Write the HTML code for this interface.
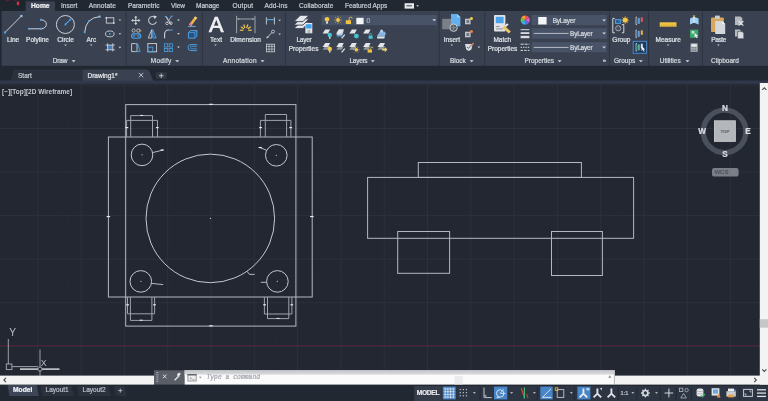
<!DOCTYPE html>
<html><head><meta charset="utf-8"><title>AutoCAD</title>
<style>
html,body{margin:0;padding:0;background:#222832;overflow:hidden;}
body{width:768px;height:401px;position:relative;font-family:"Liberation Sans",sans-serif;}
#app{position:absolute;left:0;top:0;width:768px;height:401px;overflow:hidden;background:#222832;}
#blur{position:absolute;left:-4px;top:-4px;width:776px;height:409px;filter:blur(0.45px);}
#in{position:absolute;left:4px;top:4px;width:768px;height:401px;}
#in svg{position:absolute;left:0;top:0;}
.t{position:absolute;white-space:nowrap;-webkit-text-stroke:0.22px currentColor;font-family:"Liberation Sans",sans-serif;}
</style></head><body>
<div id="app"><div id="blur"><div id="in">
<svg width="768" height="401" viewBox="0 0 768 401">
<rect x="0.00" y="0.00" width="768.00" height="401.00" fill="#222832" />
<rect x="25.40" y="1.40" width="29.60" height="10.10" fill="#3a4251" />
<rect x="0.00" y="0.00" width="25.40" height="10.90" fill="#1d252d" />
<rect x="16.80" y="1.60" width="2.40" height="3.60" fill="#c9364a" />
<rect x="5.50" y="0.00" width="4.00" height="1.20" fill="#5a1f3a" />
<rect x="13.50" y="0.00" width="3.00" height="1.00" fill="#4a2030" />
<rect x="1.60" y="11.00" width="766.40" height="54.80" fill="#3a4251" />
<line x1="126.10" y1="11.50" x2="126.10" y2="65.80" stroke="#2d3440" stroke-width="1" />
<line x1="202.40" y1="11.50" x2="202.40" y2="65.80" stroke="#2d3440" stroke-width="1" />
<line x1="285.40" y1="11.50" x2="285.40" y2="65.80" stroke="#2d3440" stroke-width="1" />
<line x1="439.20" y1="11.50" x2="439.20" y2="65.80" stroke="#2d3440" stroke-width="1" />
<line x1="484.70" y1="11.50" x2="484.70" y2="65.80" stroke="#2d3440" stroke-width="1" />
<line x1="609.50" y1="11.50" x2="609.50" y2="65.80" stroke="#2d3440" stroke-width="1" />
<line x1="648.60" y1="11.50" x2="648.60" y2="65.80" stroke="#2d3440" stroke-width="1" />
<line x1="702.40" y1="11.50" x2="702.40" y2="65.80" stroke="#2d3440" stroke-width="1" />
<path d="M10 81.5 L14 69.5 H82.5 V81.5Z" fill="#2b323e" stroke="none" stroke-width="1" />
<path d="M82.5 81.5 V69.5 H146.5 Q148.6 69.5 149.4 71.5 L153.6 81.5Z" fill="#3a4251" stroke="none" stroke-width="1" />
<rect x="156.00" y="72.20" width="10.60" height="6.60" fill="#313744" />
<rect x="0.00" y="80.60" width="768.00" height="3.30" fill="#31384b" />
<rect x="0.00" y="83.90" width="759.80" height="291.70" fill="#222731" />
<g id="grid">
<line x1="3.16" y1="83.90" x2="3.16" y2="375.60" stroke="#252a34" stroke-width="0.8" />
<line x1="11.82" y1="83.90" x2="11.82" y2="375.60" stroke="#252a34" stroke-width="0.8" />
<line x1="20.48" y1="83.90" x2="20.48" y2="375.60" stroke="#252a34" stroke-width="0.8" />
<line x1="29.14" y1="83.90" x2="29.14" y2="375.60" stroke="#252a34" stroke-width="0.8" />
<line x1="37.80" y1="83.90" x2="37.80" y2="375.60" stroke="#2c323d" stroke-width="1" />
<line x1="46.46" y1="83.90" x2="46.46" y2="375.60" stroke="#252a34" stroke-width="0.8" />
<line x1="55.12" y1="83.90" x2="55.12" y2="375.60" stroke="#252a34" stroke-width="0.8" />
<line x1="63.78" y1="83.90" x2="63.78" y2="375.60" stroke="#252a34" stroke-width="0.8" />
<line x1="72.44" y1="83.90" x2="72.44" y2="375.60" stroke="#252a34" stroke-width="0.8" />
<line x1="81.10" y1="83.90" x2="81.10" y2="375.60" stroke="#2c323d" stroke-width="1" />
<line x1="89.76" y1="83.90" x2="89.76" y2="375.60" stroke="#252a34" stroke-width="0.8" />
<line x1="98.42" y1="83.90" x2="98.42" y2="375.60" stroke="#252a34" stroke-width="0.8" />
<line x1="107.08" y1="83.90" x2="107.08" y2="375.60" stroke="#252a34" stroke-width="0.8" />
<line x1="115.74" y1="83.90" x2="115.74" y2="375.60" stroke="#252a34" stroke-width="0.8" />
<line x1="124.40" y1="83.90" x2="124.40" y2="375.60" stroke="#2c323d" stroke-width="1" />
<line x1="133.06" y1="83.90" x2="133.06" y2="375.60" stroke="#252a34" stroke-width="0.8" />
<line x1="141.72" y1="83.90" x2="141.72" y2="375.60" stroke="#252a34" stroke-width="0.8" />
<line x1="150.38" y1="83.90" x2="150.38" y2="375.60" stroke="#252a34" stroke-width="0.8" />
<line x1="159.04" y1="83.90" x2="159.04" y2="375.60" stroke="#252a34" stroke-width="0.8" />
<line x1="167.70" y1="83.90" x2="167.70" y2="375.60" stroke="#2c323d" stroke-width="1" />
<line x1="176.36" y1="83.90" x2="176.36" y2="375.60" stroke="#252a34" stroke-width="0.8" />
<line x1="185.02" y1="83.90" x2="185.02" y2="375.60" stroke="#252a34" stroke-width="0.8" />
<line x1="193.68" y1="83.90" x2="193.68" y2="375.60" stroke="#252a34" stroke-width="0.8" />
<line x1="202.34" y1="83.90" x2="202.34" y2="375.60" stroke="#252a34" stroke-width="0.8" />
<line x1="211.00" y1="83.90" x2="211.00" y2="375.60" stroke="#2c323d" stroke-width="1" />
<line x1="219.66" y1="83.90" x2="219.66" y2="375.60" stroke="#252a34" stroke-width="0.8" />
<line x1="228.32" y1="83.90" x2="228.32" y2="375.60" stroke="#252a34" stroke-width="0.8" />
<line x1="236.98" y1="83.90" x2="236.98" y2="375.60" stroke="#252a34" stroke-width="0.8" />
<line x1="245.64" y1="83.90" x2="245.64" y2="375.60" stroke="#252a34" stroke-width="0.8" />
<line x1="254.30" y1="83.90" x2="254.30" y2="375.60" stroke="#2c323d" stroke-width="1" />
<line x1="262.96" y1="83.90" x2="262.96" y2="375.60" stroke="#252a34" stroke-width="0.8" />
<line x1="271.62" y1="83.90" x2="271.62" y2="375.60" stroke="#252a34" stroke-width="0.8" />
<line x1="280.28" y1="83.90" x2="280.28" y2="375.60" stroke="#252a34" stroke-width="0.8" />
<line x1="288.94" y1="83.90" x2="288.94" y2="375.60" stroke="#252a34" stroke-width="0.8" />
<line x1="297.60" y1="83.90" x2="297.60" y2="375.60" stroke="#2c323d" stroke-width="1" />
<line x1="306.26" y1="83.90" x2="306.26" y2="375.60" stroke="#252a34" stroke-width="0.8" />
<line x1="314.92" y1="83.90" x2="314.92" y2="375.60" stroke="#252a34" stroke-width="0.8" />
<line x1="323.58" y1="83.90" x2="323.58" y2="375.60" stroke="#252a34" stroke-width="0.8" />
<line x1="332.24" y1="83.90" x2="332.24" y2="375.60" stroke="#252a34" stroke-width="0.8" />
<line x1="340.90" y1="83.90" x2="340.90" y2="375.60" stroke="#2c323d" stroke-width="1" />
<line x1="349.56" y1="83.90" x2="349.56" y2="375.60" stroke="#252a34" stroke-width="0.8" />
<line x1="358.22" y1="83.90" x2="358.22" y2="375.60" stroke="#252a34" stroke-width="0.8" />
<line x1="366.88" y1="83.90" x2="366.88" y2="375.60" stroke="#252a34" stroke-width="0.8" />
<line x1="375.54" y1="83.90" x2="375.54" y2="375.60" stroke="#252a34" stroke-width="0.8" />
<line x1="384.20" y1="83.90" x2="384.20" y2="375.60" stroke="#2c323d" stroke-width="1" />
<line x1="392.86" y1="83.90" x2="392.86" y2="375.60" stroke="#252a34" stroke-width="0.8" />
<line x1="401.52" y1="83.90" x2="401.52" y2="375.60" stroke="#252a34" stroke-width="0.8" />
<line x1="410.18" y1="83.90" x2="410.18" y2="375.60" stroke="#252a34" stroke-width="0.8" />
<line x1="418.84" y1="83.90" x2="418.84" y2="375.60" stroke="#252a34" stroke-width="0.8" />
<line x1="427.50" y1="83.90" x2="427.50" y2="375.60" stroke="#2c323d" stroke-width="1" />
<line x1="436.16" y1="83.90" x2="436.16" y2="375.60" stroke="#252a34" stroke-width="0.8" />
<line x1="444.82" y1="83.90" x2="444.82" y2="375.60" stroke="#252a34" stroke-width="0.8" />
<line x1="453.48" y1="83.90" x2="453.48" y2="375.60" stroke="#252a34" stroke-width="0.8" />
<line x1="462.14" y1="83.90" x2="462.14" y2="375.60" stroke="#252a34" stroke-width="0.8" />
<line x1="470.80" y1="83.90" x2="470.80" y2="375.60" stroke="#2c323d" stroke-width="1" />
<line x1="479.46" y1="83.90" x2="479.46" y2="375.60" stroke="#252a34" stroke-width="0.8" />
<line x1="488.12" y1="83.90" x2="488.12" y2="375.60" stroke="#252a34" stroke-width="0.8" />
<line x1="496.78" y1="83.90" x2="496.78" y2="375.60" stroke="#252a34" stroke-width="0.8" />
<line x1="505.44" y1="83.90" x2="505.44" y2="375.60" stroke="#252a34" stroke-width="0.8" />
<line x1="514.10" y1="83.90" x2="514.10" y2="375.60" stroke="#2c323d" stroke-width="1" />
<line x1="522.76" y1="83.90" x2="522.76" y2="375.60" stroke="#252a34" stroke-width="0.8" />
<line x1="531.42" y1="83.90" x2="531.42" y2="375.60" stroke="#252a34" stroke-width="0.8" />
<line x1="540.08" y1="83.90" x2="540.08" y2="375.60" stroke="#252a34" stroke-width="0.8" />
<line x1="548.74" y1="83.90" x2="548.74" y2="375.60" stroke="#252a34" stroke-width="0.8" />
<line x1="557.40" y1="83.90" x2="557.40" y2="375.60" stroke="#2c323d" stroke-width="1" />
<line x1="566.06" y1="83.90" x2="566.06" y2="375.60" stroke="#252a34" stroke-width="0.8" />
<line x1="574.72" y1="83.90" x2="574.72" y2="375.60" stroke="#252a34" stroke-width="0.8" />
<line x1="583.38" y1="83.90" x2="583.38" y2="375.60" stroke="#252a34" stroke-width="0.8" />
<line x1="592.04" y1="83.90" x2="592.04" y2="375.60" stroke="#252a34" stroke-width="0.8" />
<line x1="600.70" y1="83.90" x2="600.70" y2="375.60" stroke="#2c323d" stroke-width="1" />
<line x1="609.36" y1="83.90" x2="609.36" y2="375.60" stroke="#252a34" stroke-width="0.8" />
<line x1="618.02" y1="83.90" x2="618.02" y2="375.60" stroke="#252a34" stroke-width="0.8" />
<line x1="626.68" y1="83.90" x2="626.68" y2="375.60" stroke="#252a34" stroke-width="0.8" />
<line x1="635.34" y1="83.90" x2="635.34" y2="375.60" stroke="#252a34" stroke-width="0.8" />
<line x1="644.00" y1="83.90" x2="644.00" y2="375.60" stroke="#2c323d" stroke-width="1" />
<line x1="652.66" y1="83.90" x2="652.66" y2="375.60" stroke="#252a34" stroke-width="0.8" />
<line x1="661.32" y1="83.90" x2="661.32" y2="375.60" stroke="#252a34" stroke-width="0.8" />
<line x1="669.98" y1="83.90" x2="669.98" y2="375.60" stroke="#252a34" stroke-width="0.8" />
<line x1="678.64" y1="83.90" x2="678.64" y2="375.60" stroke="#252a34" stroke-width="0.8" />
<line x1="687.30" y1="83.90" x2="687.30" y2="375.60" stroke="#2c323d" stroke-width="1" />
<line x1="695.96" y1="83.90" x2="695.96" y2="375.60" stroke="#252a34" stroke-width="0.8" />
<line x1="704.62" y1="83.90" x2="704.62" y2="375.60" stroke="#252a34" stroke-width="0.8" />
<line x1="713.28" y1="83.90" x2="713.28" y2="375.60" stroke="#252a34" stroke-width="0.8" />
<line x1="721.94" y1="83.90" x2="721.94" y2="375.60" stroke="#252a34" stroke-width="0.8" />
<line x1="730.60" y1="83.90" x2="730.60" y2="375.60" stroke="#2c323d" stroke-width="1" />
<line x1="739.26" y1="83.90" x2="739.26" y2="375.60" stroke="#252a34" stroke-width="0.8" />
<line x1="747.92" y1="83.90" x2="747.92" y2="375.60" stroke="#252a34" stroke-width="0.8" />
<line x1="756.58" y1="83.90" x2="756.58" y2="375.60" stroke="#252a34" stroke-width="0.8" />
<line x1="0.00" y1="84.95" x2="759.80" y2="84.95" stroke="#2c323d" stroke-width="1" />
<line x1="0.00" y1="93.66" x2="759.80" y2="93.66" stroke="#252a34" stroke-width="0.8" />
<line x1="0.00" y1="102.37" x2="759.80" y2="102.37" stroke="#252a34" stroke-width="0.8" />
<line x1="0.00" y1="111.08" x2="759.80" y2="111.08" stroke="#252a34" stroke-width="0.8" />
<line x1="0.00" y1="119.79" x2="759.80" y2="119.79" stroke="#252a34" stroke-width="0.8" />
<line x1="0.00" y1="128.50" x2="759.80" y2="128.50" stroke="#2c323d" stroke-width="1" />
<line x1="0.00" y1="137.21" x2="759.80" y2="137.21" stroke="#252a34" stroke-width="0.8" />
<line x1="0.00" y1="145.92" x2="759.80" y2="145.92" stroke="#252a34" stroke-width="0.8" />
<line x1="0.00" y1="154.63" x2="759.80" y2="154.63" stroke="#252a34" stroke-width="0.8" />
<line x1="0.00" y1="163.34" x2="759.80" y2="163.34" stroke="#252a34" stroke-width="0.8" />
<line x1="0.00" y1="172.05" x2="759.80" y2="172.05" stroke="#2c323d" stroke-width="1" />
<line x1="0.00" y1="180.76" x2="759.80" y2="180.76" stroke="#252a34" stroke-width="0.8" />
<line x1="0.00" y1="189.47" x2="759.80" y2="189.47" stroke="#252a34" stroke-width="0.8" />
<line x1="0.00" y1="198.18" x2="759.80" y2="198.18" stroke="#252a34" stroke-width="0.8" />
<line x1="0.00" y1="206.89" x2="759.80" y2="206.89" stroke="#252a34" stroke-width="0.8" />
<line x1="0.00" y1="215.60" x2="759.80" y2="215.60" stroke="#2c323d" stroke-width="1" />
<line x1="0.00" y1="224.31" x2="759.80" y2="224.31" stroke="#252a34" stroke-width="0.8" />
<line x1="0.00" y1="233.02" x2="759.80" y2="233.02" stroke="#252a34" stroke-width="0.8" />
<line x1="0.00" y1="241.73" x2="759.80" y2="241.73" stroke="#252a34" stroke-width="0.8" />
<line x1="0.00" y1="250.44" x2="759.80" y2="250.44" stroke="#252a34" stroke-width="0.8" />
<line x1="0.00" y1="259.15" x2="759.80" y2="259.15" stroke="#2c323d" stroke-width="1" />
<line x1="0.00" y1="267.86" x2="759.80" y2="267.86" stroke="#252a34" stroke-width="0.8" />
<line x1="0.00" y1="276.57" x2="759.80" y2="276.57" stroke="#252a34" stroke-width="0.8" />
<line x1="0.00" y1="285.28" x2="759.80" y2="285.28" stroke="#252a34" stroke-width="0.8" />
<line x1="0.00" y1="293.99" x2="759.80" y2="293.99" stroke="#252a34" stroke-width="0.8" />
<line x1="0.00" y1="302.70" x2="759.80" y2="302.70" stroke="#2c323d" stroke-width="1" />
<line x1="0.00" y1="311.41" x2="759.80" y2="311.41" stroke="#252a34" stroke-width="0.8" />
<line x1="0.00" y1="320.12" x2="759.80" y2="320.12" stroke="#252a34" stroke-width="0.8" />
<line x1="0.00" y1="328.83" x2="759.80" y2="328.83" stroke="#252a34" stroke-width="0.8" />
<line x1="0.00" y1="337.54" x2="759.80" y2="337.54" stroke="#252a34" stroke-width="0.8" />
<line x1="0.00" y1="346.25" x2="759.80" y2="346.25" stroke="#2c323d" stroke-width="1" />
<line x1="0.00" y1="354.96" x2="759.80" y2="354.96" stroke="#252a34" stroke-width="0.8" />
<line x1="0.00" y1="363.67" x2="759.80" y2="363.67" stroke="#252a34" stroke-width="0.8" />
<line x1="0.00" y1="372.38" x2="759.80" y2="372.38" stroke="#252a34" stroke-width="0.8" />
</g>
<line x1="0.00" y1="345.70" x2="759.80" y2="345.70" stroke="#55223a" stroke-width="1" />
<g id="dwg" fill="none" stroke="#b4b9c0" stroke-width="1.0">
<rect x="125.70" y="104.60" width="170.20" height="221.50"/>
<rect x="108.40" y="137.00" width="203.80" height="160.00"/>
<g stroke="#c4c8cd">
<circle cx="210.30" cy="218.40" r="64.30"/>
<circle cx="142.00" cy="154.90" r="10.80"/>
<circle cx="276.30" cy="155.30" r="10.80"/>
<circle cx="140.80" cy="281.40" r="10.80"/>
<circle cx="277.40" cy="281.40" r="10.80"/>
</g>
<line x1="152.60" y1="152.60" x2="163.20" y2="150.00"/>
<line x1="266.90" y1="150.40" x2="260.00" y2="147.60"/>
<line x1="151.40" y1="283.40" x2="163.20" y2="284.60"/>
<line x1="266.60" y1="282.30" x2="260.80" y2="282.30"/>
<polyline points="246.9,271.2 249.4,274.4 254.6,274.4"/>
<g stroke="#9ea4ac">
<polyline points="126.6,137 126.6,120.4 157.5,120.4 157.5,137"/>
<polyline points="130.7,137 130.7,115.6 152.5,115.6 152.5,137"/>
<polyline points="260.4,137 260.4,120.4 290.9,120.4 290.9,137"/>
<polyline points="265.3,137 265.3,114.5 286.6,114.5 286.6,137"/>
<polyline points="127.5,297 127.5,313.8 154.6,313.8 154.6,297"/>
<polyline points="130.4,297 130.4,320.4 151.9,320.4 151.9,297"/>
<polyline points="264.4,297 264.4,314 291.9,314 291.9,297"/>
<polyline points="267.5,297 267.5,318.6 288.8,318.6 288.8,297"/>
</g>
<rect x="418.30" y="162.50" width="163.10" height="14.90"/>
<rect x="367.60" y="177.40" width="266.00" height="60.90"/>
<rect x="397.70" y="231.50" width="51.90" height="41.80"/>
<rect x="551.50" y="231.50" width="50.90" height="44.00"/>
</g>
<line x1="209.20" y1="104.30" x2="212.80" y2="104.30" stroke="#eef0f2" stroke-width="1.1" />
<line x1="209.20" y1="325.80" x2="212.80" y2="325.80" stroke="#eef0f2" stroke-width="1.1" />
<line x1="106.60" y1="216.60" x2="110.20" y2="216.60" stroke="#eef0f2" stroke-width="1.1" />
<line x1="310.00" y1="216.60" x2="313.60" y2="216.60" stroke="#eef0f2" stroke-width="1.1" />
<line x1="125.50" y1="127.60" x2="128.30" y2="127.60" stroke="#eef0f2" stroke-width="1.1" />
<line x1="155.90" y1="127.60" x2="158.70" y2="127.60" stroke="#eef0f2" stroke-width="1.1" />
<line x1="259.20" y1="127.60" x2="262.00" y2="127.60" stroke="#eef0f2" stroke-width="1.1" />
<line x1="289.30" y1="127.60" x2="292.10" y2="127.60" stroke="#eef0f2" stroke-width="1.1" />
<line x1="126.20" y1="304.80" x2="129.00" y2="304.80" stroke="#eef0f2" stroke-width="1.1" />
<line x1="153.10" y1="304.80" x2="155.90" y2="304.80" stroke="#eef0f2" stroke-width="1.1" />
<line x1="263.20" y1="304.80" x2="266.00" y2="304.80" stroke="#eef0f2" stroke-width="1.1" />
<line x1="290.40" y1="304.80" x2="293.20" y2="304.80" stroke="#eef0f2" stroke-width="1.1" />
<line x1="140.30" y1="115.40" x2="143.10" y2="115.40" stroke="#eef0f2" stroke-width="1.0" />
<line x1="139.80" y1="320.20" x2="142.60" y2="320.20" stroke="#eef0f2" stroke-width="1.0" />
<line x1="276.70" y1="318.40" x2="279.50" y2="318.40" stroke="#eef0f2" stroke-width="1.0" />
<line x1="160.60" y1="150.00" x2="163.80" y2="150.00" stroke="#eef0f2" stroke-width="1.1" />
<line x1="258.60" y1="147.50" x2="261.80" y2="147.50" stroke="#eef0f2" stroke-width="1.1" />
<rect x="209.90" y="217.90" width="1.00" height="1.00" fill="#d8dbde" />
<rect x="141.60" y="154.30" width="1.00" height="1.00" fill="#d8dbde" />
<rect x="275.80" y="154.90" width="1.00" height="1.00" fill="#d8dbde" />
<rect x="140.50" y="280.80" width="1.00" height="1.00" fill="#d8dbde" />
<rect x="276.80" y="280.80" width="1.00" height="1.00" fill="#d8dbde" />
<line x1="8.30" y1="339.00" x2="8.30" y2="364.00" stroke="#a9adb3" stroke-width="0.9" />
<line x1="11.90" y1="366.60" x2="38.00" y2="366.60" stroke="#a9adb3" stroke-width="0.9" />
<rect x="6.30" y="364.00" width="5.60" height="5.60" fill="none" stroke="#a9adb3" stroke-width="0.9" />
<line x1="40.00" y1="349.50" x2="40.00" y2="375.60" stroke="#a9adb3" stroke-width="0.9" />
<line x1="20.00" y1="369.10" x2="59.50" y2="369.10" stroke="#b9bcc0" stroke-width="1.7" />
<circle cx="40.00" cy="369.10" r="2.10" fill="#222731" stroke="#a9adb3" stroke-width="0.9" />
<circle cx="724.60" cy="131.40" r="21.30" fill="none" stroke="#4a505c" stroke-width="5.4" />
<rect x="714.00" y="120.50" width="21.70" height="21.20" fill="#b3b6ba" />
<rect x="714.40" y="120.90" width="20.90" height="20.40" fill="none" stroke="#c4c7ca" stroke-width="0.8" />
<path d="M712 170.2 a2.2 2.2 0 0 1 2.2 -2.2 h22.2 a2.2 2.2 0 0 1 2.2 2.2 v4.2 a2.2 2.2 0 0 1 -2.2 2.2 h-22.2 a2.2 2.2 0 0 1 -2.2 -2.2z" fill="#7a7f87" stroke="none" stroke-width="1" />
<path d="M732.00 171.70h2.6l-1.30 1.4z" fill="#8d9299" stroke="none" stroke-width="1" />
<rect x="759.80" y="83.00" width="8.20" height="301.60" fill="#f3f3f3" />
<rect x="0.00" y="375.60" width="154.00" height="9.00" fill="#f3f3f3" />
<rect x="614.60" y="375.60" width="153.40" height="9.00" fill="#f3f3f3" />
<rect x="154.00" y="370.30" width="30.60" height="14.30" fill="#595e67" />
<rect x="184.60" y="370.30" width="430.00" height="14.30" fill="#fbfbfb" />
<defs><linearGradient id="cg" x1="0" y1="0" x2="0" y2="1"><stop offset="0" stop-color="#c2c4c8"/><stop offset="0.7" stop-color="#d6d8da"/><stop offset="1" stop-color="#fbfbfb"/></linearGradient></defs>
<rect x="184.60" y="370.30" width="430.00" height="5.10" fill="url(#cg)" />
<rect x="454.40" y="376.00" width="8.30" height="8.40" fill="#ececef" />
<rect x="759.80" y="319.20" width="8.20" height="8.50" fill="#c6c6c6" />
<line x1="614.40" y1="370.30" x2="614.40" y2="384.60" stroke="#b8bbc0" stroke-width="0.8" />
<rect x="156.30" y="372.00" width="2.00" height="1.20" fill="#9da2aa" />
<rect x="156.30" y="374.20" width="2.00" height="1.20" fill="#9da2aa" />
<rect x="156.30" y="376.40" width="2.00" height="1.20" fill="#9da2aa" />
<rect x="156.30" y="378.60" width="2.00" height="1.20" fill="#9da2aa" />
<rect x="156.30" y="380.80" width="2.00" height="1.20" fill="#9da2aa" />
<line x1="162.90" y1="374.60" x2="166.50" y2="378.20" stroke="#e4e6e9" stroke-width="0.9" />
<line x1="166.50" y1="374.60" x2="162.90" y2="378.20" stroke="#e4e6e9" stroke-width="0.9" />
<path d="M174.6 380.2 L178.6 376.2" fill="none" stroke="#e4e6e9" stroke-width="1.3" />
<path d="M178.2 376.6 a1.9 1.9 0 1 1 2.6 -2.6 l-1.3 1.2 l0.2 0.9 l0.9 0.2z" fill="#e4e6e9" stroke="none" stroke-width="1" />
<rect x="187.90" y="374.40" width="8.30" height="6.60" fill="#eceded" stroke="#8c9096" stroke-width="0.9" />
<line x1="187.50" y1="374.80" x2="196.60" y2="374.80" stroke="#5f646b" stroke-width="1.4" />
<path d="M190 377.4 l1.5 1 l-1.5 1" fill="none" stroke="#6f747b" stroke-width="0.6" />
<line x1="192.40" y1="379.70" x2="194.40" y2="379.70" stroke="#6f747b" stroke-width="0.6" />
<path d="M199.00 376.65h2.6l-1.30 1.5z" fill="#7d8188" stroke="none" stroke-width="1" />
<path d="M608.1 377.7 l1.7 -2.4 l1.7 2.4z" fill="#8d9197" stroke="none" stroke-width="1" />
<path d="M6 377.9 l-2.1 2.1 l2.1 2.1" fill="none" stroke="#4a4e55" stroke-width="1.2" />
<path d="M754.2 377.9 l2.1 2.1 l-2.1 2.1" fill="none" stroke="#4a4e55" stroke-width="1.2" />
<path d="M762.2 89.9 l2.1 -2.1 l2.1 2.1" fill="none" stroke="#4a4e55" stroke-width="1.2" />
<path d="M762.2 369.4 l2.1 2.1 l2.1 -2.1" fill="none" stroke="#4a4e55" stroke-width="1.2" />
<path d="M7.5 385 H36.8 L38.8 396 H9.4Z" fill="#3d4656" stroke="none" stroke-width="1" />
<path d="M40.5 386 H71.8 L74 396 H42.4Z" fill="#2b323e" stroke="none" stroke-width="1" />
<path d="M77 386 H108.6 L110.8 396 H79Z" fill="#2b323e" stroke="none" stroke-width="1" />
<path d="M114 386 H124.6 L126.6 396 H116Z" fill="#2b323e" stroke="none" stroke-width="1" />
<rect x="414.30" y="386.00" width="353.70" height="15.00" fill="#2d3442" />
<rect x="414.30" y="386.00" width="26.70" height="15.00" fill="#343b49" />
<rect x="442.80" y="386.60" width="13.00" height="12.80" fill="#4585c8" />
<rect x="494.00" y="386.60" width="13.30" height="12.80" fill="#4585c8" />
<rect x="540.30" y="386.60" width="12.40" height="12.80" fill="#4585c8" />
<rect x="577.40" y="386.60" width="13.00" height="12.80" fill="#4585c8" />
<line x1="480.20" y1="387.00" x2="480.20" y2="400.00" stroke="#232a34" stroke-width="0.9" />
<line x1="537.40" y1="387.00" x2="537.40" y2="400.00" stroke="#232a34" stroke-width="0.9" />
<line x1="574.40" y1="387.00" x2="574.40" y2="400.00" stroke="#232a34" stroke-width="0.9" />
<line x1="618.40" y1="387.00" x2="618.40" y2="400.00" stroke="#232a34" stroke-width="0.9" />
<line x1="636.90" y1="387.00" x2="636.90" y2="400.00" stroke="#232a34" stroke-width="0.9" />
<line x1="660.40" y1="387.00" x2="660.40" y2="400.00" stroke="#232a34" stroke-width="0.9" />
<line x1="676.20" y1="387.00" x2="676.20" y2="400.00" stroke="#232a34" stroke-width="0.9" />
<line x1="691.50" y1="387.00" x2="691.50" y2="400.00" stroke="#232a34" stroke-width="0.9" />
<line x1="739.60" y1="387.00" x2="739.60" y2="400.00" stroke="#232a34" stroke-width="0.9" />
<rect x="404.60" y="3.20" width="9.40" height="5.40" fill="#e6e8ea" />
<rect x="406.40" y="5.20" width="5.60" height="1.20" fill="#59606b" />
<path d="M416.20 5.20h2.8l-1.40 1.6z" fill="#d0d4d9" stroke="none" stroke-width="1" />
<path d="M64.20 44.55h2.6l-1.30 1.5z" fill="#c3c8cf" stroke="none" stroke-width="1" />
<path d="M89.90 44.55h2.6l-1.30 1.5z" fill="#c3c8cf" stroke="none" stroke-width="1" />
<path d="M214.20 44.55h2.6l-1.30 1.5z" fill="#c3c8cf" stroke="none" stroke-width="1" />
<path d="M450.50 44.55h2.6l-1.30 1.5z" fill="#c3c8cf" stroke="none" stroke-width="1" />
<path d="M666.70 44.55h2.6l-1.30 1.5z" fill="#c3c8cf" stroke="none" stroke-width="1" />
<path d="M717.10 44.55h2.6l-1.30 1.5z" fill="#c3c8cf" stroke="none" stroke-width="1" />
<path d="M71.60 60.15h4l-2.00 2.1z" fill="#d5d9df" stroke="none" stroke-width="1" />
<path d="M175.20 60.15h4l-2.00 2.1z" fill="#d5d9df" stroke="none" stroke-width="1" />
<path d="M260.50 60.15h4l-2.00 2.1z" fill="#d5d9df" stroke="none" stroke-width="1" />
<path d="M370.80 60.15h4l-2.00 2.1z" fill="#d5d9df" stroke="none" stroke-width="1" />
<path d="M469.60 60.15h4l-2.00 2.1z" fill="#d5d9df" stroke="none" stroke-width="1" />
<path d="M557.60 60.15h4l-2.00 2.1z" fill="#d5d9df" stroke="none" stroke-width="1" />
<path d="M638.90 60.15h4l-2.00 2.1z" fill="#d5d9df" stroke="none" stroke-width="1" />
<path d="M685.50 60.15h4l-2.00 2.1z" fill="#d5d9df" stroke="none" stroke-width="1" />
<line x1="138.90" y1="72.90" x2="143.30" y2="77.30" stroke="#c9cdd3" stroke-width="0.9" />
<line x1="143.30" y1="72.90" x2="138.90" y2="77.30" stroke="#c9cdd3" stroke-width="0.9" />
<line x1="159.00" y1="75.70" x2="163.50" y2="75.70" stroke="#c9cdd3" stroke-width="0.9" />
<line x1="161.25" y1="73.40" x2="161.25" y2="78.00" stroke="#c9cdd3" stroke-width="0.9" />
<line x1="118.30" y1="390.60" x2="122.30" y2="390.60" stroke="#b9bfc8" stroke-width="0.9" />
<line x1="120.30" y1="388.60" x2="120.30" y2="392.60" stroke="#b9bfc8" stroke-width="0.9" />
<line x1="5.00" y1="32.40" x2="21.40" y2="16.00" stroke="#cdd1d7" stroke-width="1" />
<rect x="3.90" y="31.30" width="2.20" height="2.20" fill="#4d9fe3" />
<rect x="20.30" y="14.90" width="2.20" height="2.20" fill="#8fc3ee" />
<path d="M29 28.8 H41.2 A5.3 4.5 0 0 0 41 19.8" fill="none" stroke="#cdd1d7" stroke-width="1" />
<rect x="28.00" y="27.80" width="2.00" height="2.00" fill="#4d9fe3" />
<rect x="40.20" y="27.80" width="2.00" height="2.00" fill="#4d9fe3" />
<rect x="40.00" y="18.80" width="2.00" height="2.00" fill="#4d9fe3" />
<circle cx="65.40" cy="24.50" r="9.00" fill="none" stroke="#cdd1d7" stroke-width="1" />
<line x1="65.40" y1="24.50" x2="70.50" y2="19.40" stroke="#4d9fe3" stroke-width="1.1" />
<rect x="64.50" y="23.60" width="1.80" height="1.80" fill="#4d9fe3" />
<rect x="69.60" y="18.50" width="1.80" height="1.80" fill="#4d9fe3" />
<path d="M84.7 32.4 Q85.5 18 100 16.5" fill="none" stroke="#cdd1d7" stroke-width="1" />
<rect x="83.70" y="31.20" width="2.00" height="2.00" fill="#4d9fe3" />
<rect x="88.00" y="20.00" width="2.00" height="2.00" fill="#4d9fe3" />
<rect x="98.60" y="15.60" width="2.00" height="2.00" fill="#8fc3ee" />
<rect x="106.30" y="17.80" width="7.50" height="5.30" fill="none" stroke="#cdd1d7" stroke-width="0.9" />
<rect x="105.60" y="17.10" width="1.40" height="1.40" fill="#e6e8eb" />
<rect x="113.10" y="22.40" width="1.40" height="1.40" fill="#e6e8eb" />
<ellipse cx="109.8" cy="33.9" rx="4.3" ry="2.9" fill="none" stroke="#cdd1d7" stroke-width="0.9"/>
<rect x="109.00" y="33.10" width="1.60" height="1.60" fill="#4d9fe3" />
<rect x="107.60" y="45.10" width="5.20" height="4.70" fill="#3f7fc0" />
<line x1="107.60" y1="43.30" x2="107.60" y2="51.40" stroke="#cdd1d7" stroke-width="0.9" />
<line x1="112.80" y1="43.30" x2="112.80" y2="51.40" stroke="#cdd1d7" stroke-width="0.9" />
<line x1="105.60" y1="45.10" x2="114.80" y2="45.10" stroke="#cdd1d7" stroke-width="0.9" />
<line x1="105.60" y1="49.80" x2="114.80" y2="49.80" stroke="#cdd1d7" stroke-width="0.9" />
<path d="M118.50 19.50h2.8l-1.40 1.6z" fill="#c3c8cf" stroke="none" stroke-width="1" />
<path d="M118.50 33.20h2.8l-1.40 1.6z" fill="#c3c8cf" stroke="none" stroke-width="1" />
<path d="M118.50 46.80h2.8l-1.40 1.6z" fill="#c3c8cf" stroke="none" stroke-width="1" />
<line x1="131.80" y1="20.40" x2="139.80" y2="20.40" stroke="#cdd1d7" stroke-width="1" />
<line x1="135.80" y1="16.40" x2="135.80" y2="24.40" stroke="#cdd1d7" stroke-width="1" />
<path d="M140.40 20.40 L138.40 22.00 L138.40 18.80Z" fill="#cdd1d7" stroke="none" stroke-width="1" />
<path d="M131.20 20.40 L133.20 18.80 L133.20 22.00Z" fill="#cdd1d7" stroke="none" stroke-width="1" />
<path d="M135.80 25.00 L134.20 23.00 L137.40 23.00Z" fill="#cdd1d7" stroke="none" stroke-width="1" />
<path d="M135.80 15.80 L137.40 17.80 L134.20 17.80Z" fill="#cdd1d7" stroke="none" stroke-width="1" />
<path d="M155.4 17.6 A4 4 0 1 0 156.4 21.6" fill="none" stroke="#b8bdc5" stroke-width="1.1" />
<path d="M153.3 15.4 L156.9 16.3 L154.6 19.2Z" fill="#d5d9de" stroke="none" stroke-width="1" />
<line x1="166.00" y1="16.40" x2="170.60" y2="24.00" stroke="#cdd1d7" stroke-width="1.1" />
<line x1="171.40" y1="16.40" x2="167.20" y2="23.00" stroke="#9aa0a9" stroke-width="1" />
<circle cx="167.00" cy="23.40" r="1.30" fill="none" stroke="#cdd1d7" stroke-width="0.8" />
<circle cx="171.00" cy="23.20" r="1.30" fill="none" stroke="#cdd1d7" stroke-width="0.8" />
<line x1="164.60" y1="16.60" x2="167.00" y2="16.60" stroke="#4d9fe3" stroke-width="1" />
<line x1="170.40" y1="16.20" x2="173.00" y2="16.20" stroke="#4d9fe3" stroke-width="0.9" />
<path d="M177.10 19.60h2.8l-1.40 1.6z" fill="#c3c8cf" stroke="none" stroke-width="1" />
<path d="M189 24.4 L195 16.4 L197.2 18 L191.2 26Z" fill="#f0b24c" stroke="none" stroke-width="1" />
<path d="M189 24.4 L190.2 22.8 L192.4 24.4 L191.2 26Z" fill="#e87a8c" stroke="none" stroke-width="1" />
<path d="M194.2 17.4 L195 16.4 L197.2 18 L196.4 19Z" fill="#f6e27a" stroke="none" stroke-width="1" />
<line x1="188.00" y1="26.40" x2="195.60" y2="26.40" stroke="#7fb6e8" stroke-width="0.9" />
<circle cx="133.60" cy="30.60" r="1.60" fill="none" stroke="#cdd1d7" stroke-width="0.8" />
<circle cx="138.20" cy="30.60" r="1.60" fill="none" stroke="#cdd1d7" stroke-width="0.8" />
<path d="M139.2 29 l2 1.6 l-2 1.6" fill="none" stroke="#e0a050" stroke-width="0.8" />
<rect x="131.6" y="33.9" width="9.2" height="4.4" rx="2.2" fill="none" stroke="#4d9fe3" stroke-width="1.1"/>
<circle cx="134.00" cy="36.10" r="0.90" fill="none" stroke="#4d9fe3" stroke-width="0.7" />
<circle cx="138.40" cy="36.10" r="0.90" fill="none" stroke="#4d9fe3" stroke-width="0.7" />
<path d="M148.2 38 L151.8 29.6 V38Z" fill="none" stroke="#cdd1d7" stroke-width="0.9" />
<path d="M152.8 29.6 L156.2 38 H152.8Z" fill="#2f5f92" stroke="#4d9fe3" stroke-width="0.9" />
<path d="M164.6 38.2 V34 A4 4 0 0 1 168.6 30 H169.4" fill="none" stroke="#cdd1d7" stroke-width="1.1" />
<path d="M169.4 30 H172.6" fill="none" stroke="#4d9fe3" stroke-width="1.1" />
<path d="M177.10 33.10h2.8l-1.40 1.6z" fill="#c3c8cf" stroke="none" stroke-width="1" />
<path d="M188.4 32.6 L190.4 30.6 H196.8 V36.2 L194.8 38.2 H188.4Z" fill="#2b4f78" stroke="#4d9fe3" stroke-width="1" />
<path d="M188.4 32.6 H194.8 V38.2 M194.8 32.6 L196.8 30.6" fill="none" stroke="#4d9fe3" stroke-width="0.8" />
<path d="M131.6 43.6 H137 V51.6 H131.6Z" fill="none" stroke="#cdd1d7" stroke-width="0.9" />
<path d="M135.2 43.6 H137.6 L140.2 51.6 H135.2" fill="none" stroke="#4d9fe3" stroke-width="0.9" />
<rect x="147.80" y="43.60" width="8.80" height="8.20" fill="none" stroke="#cdd1d7" stroke-width="0.9" />
<rect x="147.80" y="47.20" width="5.00" height="4.60" fill="none" stroke="#4d9fe3" stroke-width="0.9" />
<rect x="164.40" y="43.80" width="3.40" height="3.20" fill="none" stroke="#4d9fe3" stroke-width="0.8" />
<rect x="169.20" y="43.80" width="3.40" height="3.20" fill="none" stroke="#4d9fe3" stroke-width="0.8" />
<rect x="164.40" y="48.40" width="3.40" height="3.20" fill="none" stroke="#4d9fe3" stroke-width="0.8" />
<rect x="169.20" y="48.40" width="3.40" height="3.20" fill="none" stroke="#4d9fe3" stroke-width="0.8" />
<path d="M177.10 46.60h2.8l-1.40 1.6z" fill="#c3c8cf" stroke="none" stroke-width="1" />
<path d="M197 44.6 H191 A3 3 0 0 0 191 50.6 H197" fill="none" stroke="#4d9fe3" stroke-width="1" />
<path d="M197 46.4 H191.6 A1.2 1.2 0 0 0 191.6 48.8 H197" fill="none" stroke="#4d9fe3" stroke-width="0.8" />
<text x="216.2" y="32.4" font-family="Liberation Sans,sans-serif" font-size="21.7" text-anchor="middle" fill="#eef0f2" stroke="#eef0f2" stroke-width="0.7">A</text>
<line x1="236.60" y1="15.80" x2="236.60" y2="33.20" stroke="#a9aeb6" stroke-width="0.9" />
<line x1="255.00" y1="15.80" x2="255.00" y2="33.20" stroke="#a9aeb6" stroke-width="0.9" />
<line x1="237.40" y1="19.00" x2="254.20" y2="19.00" stroke="#a9aeb6" stroke-width="0.9" />
<path d="M237 19 l2.2 -1 v2z M254.6 19 l-2.2 -1 v2z" fill="#a9aeb6" stroke="none" stroke-width="1" />
<line x1="243.40" y1="30.20" x2="239.80" y2="30.20" stroke="#f3c84a" stroke-width="1.2" />
<line x1="243.83" y1="28.82" x2="240.89" y2="26.76" stroke="#f3c84a" stroke-width="1.2" />
<line x1="244.98" y1="27.94" x2="243.75" y2="24.56" stroke="#f3c84a" stroke-width="1.2" />
<line x1="246.62" y1="27.94" x2="247.85" y2="24.56" stroke="#f3c84a" stroke-width="1.2" />
<line x1="247.77" y1="28.82" x2="250.71" y2="26.76" stroke="#f3c84a" stroke-width="1.2" />
<line x1="248.20" y1="30.20" x2="251.80" y2="30.20" stroke="#f3c84a" stroke-width="1.2" />
<line x1="266.40" y1="17.20" x2="266.40" y2="24.50" stroke="#cdd1d7" stroke-width="0.9" />
<line x1="274.40" y1="17.20" x2="274.40" y2="24.50" stroke="#cdd1d7" stroke-width="0.9" />
<line x1="266.80" y1="19.60" x2="274.00" y2="19.60" stroke="#4d9fe3" stroke-width="1.2" />
<line x1="267.40" y1="37.40" x2="272.00" y2="32.40" stroke="#cdd1d7" stroke-width="0.9" />
<circle cx="273.00" cy="31.60" r="1.50" fill="none" stroke="#cdd1d7" stroke-width="0.8" />
<path d="M266.4 38.4 l0.6 -2.4 l1.8 1.8z" fill="#cdd1d7" stroke="none" stroke-width="1" />
<rect x="266.40" y="44.20" width="8.20" height="7.60" fill="none" stroke="#cdd1d7" stroke-width="0.8" />
<line x1="266.40" y1="46.40" x2="274.60" y2="46.40" stroke="#cdd1d7" stroke-width="0.7" />
<line x1="266.40" y1="49.10" x2="274.60" y2="49.10" stroke="#cdd1d7" stroke-width="0.7" />
<line x1="269.10" y1="44.20" x2="269.10" y2="51.80" stroke="#cdd1d7" stroke-width="0.7" />
<line x1="271.90" y1="44.20" x2="271.90" y2="51.80" stroke="#cdd1d7" stroke-width="0.7" />
<path d="M278.20 19.70h2.8l-1.40 1.6z" fill="#c3c8cf" stroke="none" stroke-width="1" />
<path d="M278.20 33.40h2.8l-1.40 1.6z" fill="#c3c8cf" stroke="none" stroke-width="1" />
<path d="M300.3 22.3 H309 L303 28.6 H294Z" fill="#e3e5e8" stroke="#3a4251" stroke-width="0.9" />
<path d="M300.3 18.8 H309 L303 25.1 H294Z" fill="#e3e5e8" stroke="#3a4251" stroke-width="0.9" />
<path d="M300.3 15.3 H309 L303 21.6 H294Z" fill="#e3e5e8" stroke="#3a4251" stroke-width="0.9" />
<rect x="305.40" y="23.00" width="6.90" height="10.30" fill="#e6e8eb" />
<rect x="306.10" y="24.20" width="5.50" height="4.30" fill="#3fa0ee" />
<line x1="308.10" y1="29.80" x2="308.10" y2="33.00" stroke="#7a808a" stroke-width="0.7" />
<line x1="309.80" y1="29.80" x2="309.80" y2="33.00" stroke="#7a808a" stroke-width="0.7" />
<rect x="321.60" y="15.00" width="115.30" height="10.20" fill="#495368" />
<circle cx="327.00" cy="19.20" r="2.30" fill="#f3c84a" stroke="none" stroke-width="0" />
<rect x="326.00" y="21.40" width="2.00" height="2.20" fill="#d9dde2" />
<circle cx="338.00" cy="20.00" r="1.90" fill="#f3c84a" stroke="none" stroke-width="0" />
<line x1="340.50" y1="20.00" x2="341.70" y2="20.00" stroke="#f3c84a" stroke-width="0.8" />
<line x1="339.77" y1="21.77" x2="340.62" y2="22.62" stroke="#f3c84a" stroke-width="0.8" />
<line x1="338.00" y1="22.50" x2="338.00" y2="23.70" stroke="#f3c84a" stroke-width="0.8" />
<line x1="336.23" y1="21.77" x2="335.38" y2="22.62" stroke="#f3c84a" stroke-width="0.8" />
<line x1="335.50" y1="20.00" x2="334.30" y2="20.00" stroke="#f3c84a" stroke-width="0.8" />
<line x1="336.23" y1="18.23" x2="335.38" y2="17.38" stroke="#f3c84a" stroke-width="0.8" />
<line x1="338.00" y1="17.50" x2="338.00" y2="16.30" stroke="#f3c84a" stroke-width="0.8" />
<line x1="339.77" y1="18.23" x2="340.62" y2="17.38" stroke="#f3c84a" stroke-width="0.8" />
<rect x="345.80" y="20.20" width="5.20" height="3.80" fill="#f0c040" />
<path d="M349.2 20.2 V18.6 A1.5 1.5 0 0 1 352.2 18.6" fill="none" stroke="#f0c040" stroke-width="0.9" />
<rect x="356.30" y="17.80" width="7.30" height="6.40" fill="#f4f5f6" />
<path d="M432.30 19.20h3.8l-1.90 2z" fill="#d0d4d9" stroke="none" stroke-width="1" />
<path d="M325.2 29.6 H330.1 L328.0 33.5 H322.6Z" fill="#e2e4e7" stroke="none" stroke-width="1" />
<path d="M338.9 29.6 H343.8 L341.7 33.5 H336.3Z" fill="#e2e4e7" stroke="none" stroke-width="1" />
<path d="M351.9 29.6 H356.8 L354.7 33.5 H349.3Z" fill="#e2e4e7" stroke="none" stroke-width="1" />
<path d="M365.7 29.6 H370.6 L368.5 33.5 H363.1Z" fill="#e2e4e7" stroke="none" stroke-width="1" />
<path d="M325.2 45.9 H330.1 L328.0 49.8 H322.6Z" fill="#8f959d" stroke="none" stroke-width="1" />
<path d="M325.2 43.0 H330.1 L328.0 46.9 H322.6Z" fill="#e2e4e7" stroke="none" stroke-width="1" />
<path d="M338.9 45.9 H343.8 L341.7 49.8 H336.3Z" fill="#8f959d" stroke="none" stroke-width="1" />
<path d="M338.9 43.0 H343.8 L341.7 46.9 H336.3Z" fill="#e2e4e7" stroke="none" stroke-width="1" />
<path d="M351.9 45.9 H356.8 L354.7 49.8 H349.3Z" fill="#8f959d" stroke="none" stroke-width="1" />
<path d="M351.9 43.0 H356.8 L354.7 46.9 H349.3Z" fill="#e2e4e7" stroke="none" stroke-width="1" />
<path d="M365.7 45.9 H370.6 L368.5 49.8 H363.1Z" fill="#8f959d" stroke="none" stroke-width="1" />
<path d="M365.7 43.0 H370.6 L368.5 46.9 H363.1Z" fill="#e2e4e7" stroke="none" stroke-width="1" />
<path d="M380.1 45.9 H385.0 L382.9 49.8 H377.5Z" fill="#8f959d" stroke="none" stroke-width="1" />
<path d="M380.1 43.0 H385.0 L382.9 46.9 H377.5Z" fill="#e2e4e7" stroke="none" stroke-width="1" />
<circle cx="329.80" cy="34.90" r="2.20" fill="#45c2d6" stroke="none" stroke-width="0" />
<rect x="329.10" y="36.80" width="1.40" height="2.00" fill="#dfe2e6" />
<path d="M338.9 32.7 H343.8 L341.7 36.6 H336.3Z" fill="#5d9fd8" stroke="none" stroke-width="1" />
<path d="M338.9 31.1 H343.8 L341.7 35.0 H336.3Z" fill="#c9cdd2" stroke="none" stroke-width="1" />
<path d="M338.9 29.6 H343.8 L341.7 33.5 H336.3Z" fill="#e2e4e7" stroke="none" stroke-width="1" />
<line x1="341.60" y1="38.40" x2="344.80" y2="34.60" stroke="#e4e6e9" stroke-width="1.2" />
<circle cx="356.40" cy="36.10" r="2.40" fill="#45c2d6" stroke="none" stroke-width="0" />
<rect x="368.60" y="35.60" width="4.00" height="3.20" fill="#45c2d6" />
<path d="M369.6 35.6 V34.4 A1 1 0 0 1 371.6 34.4 V35.6" fill="none" stroke="#45c2d6" stroke-width="0.8" />
<path d="M377.4 35.2 L380 31.4 H384.4 L386 33.2 L384.6 36.6 H377.4Z" fill="#86b2e2" stroke="none" stroke-width="1" />
<circle cx="381.60" cy="31.00" r="1.50" fill="#b9d4f0" stroke="none" stroke-width="0" />
<path d="M377.2 36.4 H385 L384.2 38.6 H377.2Z" fill="#e4e6e9" stroke="none" stroke-width="1" />
<circle cx="329.80" cy="48.90" r="2.20" fill="#f3c84a" stroke="none" stroke-width="0" />
<rect x="329.10" y="50.80" width="1.40" height="1.80" fill="#dfe2e6" />
<line x1="341.60" y1="52.40" x2="344.80" y2="48.60" stroke="#e4e6e9" stroke-width="1.2" />
<circle cx="356.40" cy="49.80" r="1.80" fill="#f3c84a" stroke="none" stroke-width="0" />
<line x1="358.60" y1="49.80" x2="359.60" y2="49.80" stroke="#f3c84a" stroke-width="0.7" />
<line x1="357.50" y1="51.71" x2="358.00" y2="52.57" stroke="#f3c84a" stroke-width="0.7" />
<line x1="355.30" y1="51.71" x2="354.80" y2="52.57" stroke="#f3c84a" stroke-width="0.7" />
<line x1="354.20" y1="49.80" x2="353.20" y2="49.80" stroke="#f3c84a" stroke-width="0.7" />
<line x1="355.30" y1="47.89" x2="354.80" y2="47.03" stroke="#f3c84a" stroke-width="0.7" />
<line x1="357.50" y1="47.89" x2="358.00" y2="47.03" stroke="#f3c84a" stroke-width="0.7" />
<rect x="367.60" y="49.40" width="4.40" height="3.20" fill="#f0c040" />
<path d="M370.8 49.4 V48.2 A1.1 1.1 0 0 1 373 48.2" fill="none" stroke="#f0c040" stroke-width="0.8" />
<path d="M382.2 48.6 h2.6 v-1.6 l2.6 2.6 l-2.6 2.6 v-1.6 h-2.6z" fill="#f3d27a" stroke="none" stroke-width="1" />
<rect x="442.20" y="18.80" width="12.00" height="10.50" fill="#7a7f88" />
<path d="M451 14.1 H457.4 L460.4 17.2 V26.2 H451Z" fill="#62b0ee" stroke="none" stroke-width="1" />
<path d="M457.4 14.3 V17.2 H460.2Z" fill="#b5dbf7" stroke="none" stroke-width="1" />
<circle cx="453.60" cy="27.70" r="3.70" fill="#565c66" stroke="#c7cbd1" stroke-width="1" />
<line x1="453.60" y1="25.30" x2="453.60" y2="30.10" stroke="#9aa0a8" stroke-width="0.6" />
<line x1="451.20" y1="27.70" x2="456.00" y2="27.70" stroke="#9aa0a8" stroke-width="0.6" />
<rect x="465.00" y="18.70" width="5.60" height="5.60" fill="#bfc4cb" />
<rect x="466.40" y="20.10" width="2.80" height="2.80" fill="#6d7480" />
<circle cx="471.40" cy="18.50" r="1.60" fill="#f3c84a" stroke="none" stroke-width="0" />
<rect x="465.00" y="31.70" width="5.60" height="5.60" fill="#bfc4cb" />
<rect x="466.40" y="33.10" width="2.80" height="2.80" fill="#6d7480" />
<circle cx="471.40" cy="31.50" r="1.60" fill="#e8804c" stroke="none" stroke-width="0" />
<path d="M465 44 H472.6 L471.4 49.4 L468.8 51 L466.2 49.4Z" fill="#d9dde2" stroke="none" stroke-width="1" />
<path d="M467 47 l1.4 1.4 l2.6 -3" fill="none" stroke="#4b525d" stroke-width="0.8" />
<line x1="470.60" y1="46.20" x2="473.60" y2="43.00" stroke="#e8804c" stroke-width="1.2" />
<path d="M477.50 46.60h2.8l-1.40 1.6z" fill="#c3c8cf" stroke="none" stroke-width="1" />
<rect x="494" y="15" width="11.4" height="16.4" rx="1" fill="#e1e3e6"/>
<rect x="495.80" y="16.80" width="7.80" height="6.40" fill="#4aa3ea" />
<rect x="496.00" y="26.00" width="3.60" height="1.00" fill="#8b919a" />
<rect x="496.00" y="28.40" width="7.00" height="1.00" fill="#8b919a" />
<path d="M502.4 27.8 L504.6 25.8 L510.8 31.6 L508.8 33.6Z" fill="#edc66a" stroke="none" stroke-width="1" />
<path d="M504.8 25.6 L507.2 23.2 L508.6 24.6 L506.2 27Z" fill="#e6e8ea" stroke="none" stroke-width="1" />
<path d="M525.2 20.1 L525.20 15.50 A4.6 4.6 0 0 1 529.18 17.80Z" fill="#f0506a" stroke="none" stroke-width="1" />
<path d="M525.2 20.1 L529.18 17.80 A4.6 4.6 0 0 1 529.18 22.40Z" fill="#e45ad0" stroke="none" stroke-width="1" />
<path d="M525.2 20.1 L529.18 22.40 A4.6 4.6 0 0 1 525.20 24.70Z" fill="#6a6af0" stroke="none" stroke-width="1" />
<path d="M525.2 20.1 L525.20 24.70 A4.6 4.6 0 0 1 521.22 22.40Z" fill="#3ab0e0" stroke="none" stroke-width="1" />
<path d="M525.2 20.1 L521.22 22.40 A4.6 4.6 0 0 1 521.22 17.80Z" fill="#5ac85a" stroke="none" stroke-width="1" />
<path d="M525.2 20.1 L521.22 17.80 A4.6 4.6 0 0 1 525.20 15.50Z" fill="#f5a030" stroke="none" stroke-width="1" />
<rect x="531.70" y="15.00" width="75.20" height="10.20" fill="#495368" />
<rect x="531.70" y="28.10" width="75.20" height="10.60" fill="#495368" />
<rect x="531.70" y="42.10" width="75.20" height="10.20" fill="#495368" />
<rect x="538.20" y="17.00" width="8.40" height="7.50" fill="#f4f5f6" />
<line x1="533.80" y1="33.40" x2="568.60" y2="33.40" stroke="#c3c8cf" stroke-width="0.9" />
<line x1="533.80" y1="47.40" x2="568.60" y2="47.40" stroke="#c3c8cf" stroke-width="0.9" />
<path d="M602.20 19.40h3.8l-1.90 2z" fill="#d0d4d9" stroke="none" stroke-width="1" />
<path d="M602.20 32.60h3.8l-1.90 2z" fill="#d0d4d9" stroke="none" stroke-width="1" />
<path d="M602.20 46.40h3.8l-1.90 2z" fill="#d0d4d9" stroke="none" stroke-width="1" />
<rect x="520.60" y="29.20" width="8.80" height="1.00" fill="#d9dde2" />
<rect x="520.60" y="32.20" width="8.80" height="1.80" fill="#d9dde2" />
<rect x="520.60" y="35.80" width="8.80" height="2.40" fill="#d9dde2" />
<line x1="520.60" y1="44.20" x2="529.40" y2="44.20" stroke="#d9dde2" stroke-width="1" stroke-dasharray="3 1"/>
<line x1="520.60" y1="47.30" x2="529.40" y2="47.30" stroke="#d9dde2" stroke-width="1" stroke-dasharray="1.4 1"/>
<line x1="520.60" y1="50.40" x2="529.40" y2="50.40" stroke="#d9dde2" stroke-width="1" stroke-dasharray="2.4 1.2"/>
<path d="M614.8 18.4 H612.8 V32.8 H614.8 M621.8 24.6 H623.8 V32.8 H621.8" fill="none" stroke="#d3d7dc" stroke-width="1" />
<rect x="615.40" y="19.60" width="5.00" height="3.80" fill="#2f5f92" stroke="#4d9fe3" stroke-width="1" />
<circle cx="618.20" cy="28.30" r="2.60" fill="#4a505b" stroke="#aab0b8" stroke-width="0.9" />
<circle cx="625.20" cy="20.00" r="2.60" fill="#f3c84a" stroke="none" stroke-width="0" />
<line x1="628.10" y1="20.20" x2="629.10" y2="20.20" stroke="#f3c84a" stroke-width="0.7" />
<line x1="627.25" y1="22.25" x2="627.96" y2="22.96" stroke="#f3c84a" stroke-width="0.7" />
<line x1="625.20" y1="23.10" x2="625.20" y2="24.10" stroke="#f3c84a" stroke-width="0.7" />
<line x1="623.15" y1="22.25" x2="622.44" y2="22.96" stroke="#f3c84a" stroke-width="0.7" />
<line x1="622.30" y1="20.20" x2="621.30" y2="20.20" stroke="#f3c84a" stroke-width="0.7" />
<line x1="623.15" y1="18.15" x2="622.44" y2="17.44" stroke="#f3c84a" stroke-width="0.7" />
<line x1="625.20" y1="17.30" x2="625.20" y2="16.30" stroke="#f3c84a" stroke-width="0.7" />
<line x1="627.25" y1="18.15" x2="627.96" y2="17.44" stroke="#f3c84a" stroke-width="0.7" />
<rect x="633.20" y="41.30" width="13.40" height="12.00" fill="#1f3b5c" stroke="#4a8fd6" stroke-width="0.9" />
<path d="M637.0 17.1 H636.0 V24.7 H637.0" fill="none" stroke="#d3d7dc" stroke-width="0.8" />
<rect x="637.60" y="17.90" width="2.20" height="6.00" fill="#5a9ede" />
<rect x="640.80" y="17.30" width="2.00" height="4.60" fill="#e05a5a" />
<path d="M637.0 30.1 H636.0 V37.7 H637.0" fill="none" stroke="#d3d7dc" stroke-width="0.8" />
<rect x="637.60" y="30.90" width="2.20" height="6.00" fill="#5a9ede" />
<rect x="640.80" y="30.30" width="2.00" height="4.60" fill="#e8b04c" />
<path d="M637.0 43.5 H636.0 V51.1 H637.0" fill="none" stroke="#d3d7dc" stroke-width="0.8" />
<rect x="637.60" y="44.30" width="2.20" height="6.00" fill="#4fb890" />
<rect x="640.80" y="43.70" width="2.00" height="4.60" fill="#d9dde2" />
<path d="M641.6 46 l0 5 l1.2 -1.2 l1 2 l0.8 -0.4 l-1 -2 h1.6z" fill="#f2f3f4" stroke="none" stroke-width="1" />
<rect x="659.70" y="22.30" width="16.80" height="4.40" fill="#f2c445" />
<line x1="661.80" y1="24.60" x2="661.80" y2="26.70" stroke="#b98f26" stroke-width="0.6" />
<line x1="663.90" y1="24.60" x2="663.90" y2="26.70" stroke="#b98f26" stroke-width="0.6" />
<line x1="666.00" y1="24.60" x2="666.00" y2="26.70" stroke="#b98f26" stroke-width="0.6" />
<line x1="668.10" y1="24.60" x2="668.10" y2="26.70" stroke="#b98f26" stroke-width="0.6" />
<line x1="670.20" y1="24.60" x2="670.20" y2="26.70" stroke="#b98f26" stroke-width="0.6" />
<line x1="672.30" y1="24.60" x2="672.30" y2="26.70" stroke="#b98f26" stroke-width="0.6" />
<line x1="674.40" y1="24.60" x2="674.40" y2="26.70" stroke="#b98f26" stroke-width="0.6" />
<path d="M690 18.4 L694 16.8 L698.6 18.4 V24.4 L694 22.8 L690 24.4Z" fill="#9fd0f2" stroke="none" stroke-width="1" />
<path d="M694 16.8 V22.8" fill="none" stroke="#f2f3f4" stroke-width="0.9" />
<path d="M692.6 15.4 l1.4 2.2 l1.4 -2.2z" fill="#f3c84a" stroke="none" stroke-width="1" />
<rect x="690.00" y="29.60" width="8.20" height="8.20" fill="#3fa56b" />
<rect x="691.60" y="31.00" width="2.80" height="2.60" fill="#bfe6cf" />
<path d="M694.6 33 l0 4.6 l1.2 -1.1 l0.9 1.8 l0.8 -0.4 l-0.9 -1.8 h1.6z" fill="#f2f3f4" stroke="none" stroke-width="1" />
<rect x="690.60" y="43.40" width="7.00" height="8.40" fill="#b9bdc3" />
<rect x="691.60" y="44.40" width="5.00" height="2.00" fill="#eef0f1" />
<rect x="691.60" y="47.20" width="1.20" height="0.90" fill="#5d636d" />
<rect x="693.40" y="47.20" width="1.20" height="0.90" fill="#5d636d" />
<rect x="695.20" y="47.20" width="1.20" height="0.90" fill="#5d636d" />
<rect x="691.60" y="48.70" width="1.20" height="0.90" fill="#5d636d" />
<rect x="693.40" y="48.70" width="1.20" height="0.90" fill="#5d636d" />
<rect x="695.20" y="48.70" width="1.20" height="0.90" fill="#5d636d" />
<rect x="691.60" y="50.20" width="1.20" height="0.90" fill="#5d636d" />
<rect x="693.40" y="50.20" width="1.20" height="0.90" fill="#5d636d" />
<rect x="695.20" y="50.20" width="1.20" height="0.90" fill="#5d636d" />
<rect x="711" y="17.4" width="12.8" height="14.6" rx="0.8" fill="#d9a65e"/>
<rect x="715.00" y="15.60" width="4.80" height="3.20" fill="#c9cdd2" />
<path d="M715.2 21 H722.2 L725.2 24 V34 H715.2Z" fill="#d4d7db" stroke="none" stroke-width="1" />
<path d="M722.2 21 V24 H725.2Z" fill="#f4f5f6" stroke="none" stroke-width="1" />
<path d="M735 16.6 H740.6 L742.2 18.2 V25 H735Z" fill="#b4b9bf" stroke="none" stroke-width="1" />
<line x1="738.60" y1="21.00" x2="743.40" y2="25.60" stroke="#e4e6e9" stroke-width="1.1" />
<line x1="743.40" y1="21.00" x2="738.60" y2="25.60" stroke="#e4e6e9" stroke-width="1.1" />
<path d="M735 29.4 H739.6 L741 30.8 V36.4 H735Z" fill="#b4b9bf" stroke="none" stroke-width="1" />
<path d="M737.6 31.6 H742.2 L743.8 33.2 V38.8 H737.6Z" fill="#d9dcdf" stroke="#3a4251" stroke-width="0.6" />
<line x1="445.20" y1="387.60" x2="445.20" y2="398.40" stroke="#e8eaed" stroke-width="0.7" />
<line x1="443.80" y1="389.00" x2="454.80" y2="389.00" stroke="#e8eaed" stroke-width="0.7" />
<line x1="447.90" y1="387.60" x2="447.90" y2="398.40" stroke="#e8eaed" stroke-width="0.7" />
<line x1="443.80" y1="391.70" x2="454.80" y2="391.70" stroke="#e8eaed" stroke-width="0.7" />
<line x1="450.60" y1="387.60" x2="450.60" y2="398.40" stroke="#e8eaed" stroke-width="0.7" />
<line x1="443.80" y1="394.40" x2="454.80" y2="394.40" stroke="#e8eaed" stroke-width="0.7" />
<line x1="453.30" y1="387.60" x2="453.30" y2="398.40" stroke="#e8eaed" stroke-width="0.7" />
<line x1="443.80" y1="397.10" x2="454.80" y2="397.10" stroke="#e8eaed" stroke-width="0.7" />
<rect x="459.60" y="388.90" width="1.30" height="1.30" fill="#aeb4bd" />
<rect x="462.70" y="388.90" width="1.30" height="1.30" fill="#aeb4bd" />
<rect x="465.80" y="388.90" width="1.30" height="1.30" fill="#aeb4bd" />
<rect x="459.60" y="392.00" width="1.30" height="1.30" fill="#aeb4bd" />
<rect x="462.70" y="392.00" width="1.30" height="1.30" fill="#aeb4bd" />
<rect x="465.80" y="392.00" width="1.30" height="1.30" fill="#aeb4bd" />
<rect x="459.60" y="395.10" width="1.30" height="1.30" fill="#aeb4bd" />
<rect x="462.70" y="395.10" width="1.30" height="1.30" fill="#aeb4bd" />
<rect x="465.80" y="395.10" width="1.30" height="1.30" fill="#aeb4bd" />
<path d="M472.90 392.15h3l-1.50 1.7z" fill="#d5d9de" stroke="none" stroke-width="1" />
<path d="M484 387.6 V397.6 H491.8" fill="none" stroke="#c3c8cf" stroke-width="1" />
<rect x="484.00" y="394.80" width="2.40" height="2.80" fill="#8d939c" />
<circle cx="500.20" cy="393.40" r="3.70" fill="none" stroke="#e8eaed" stroke-width="0.9" />
<path d="M500.2 393.4 H505.6 M500.2 393.4 L503.6 389.2" fill="none" stroke="#e8eaed" stroke-width="0.8" />
<path d="M496.4 397.6 h3" fill="none" stroke="#e8eaed" stroke-width="0.8" />
<path d="M510.10 392.15h3l-1.50 1.7z" fill="#d5d9de" stroke="none" stroke-width="1" />
<line x1="521.20" y1="388.00" x2="524.60" y2="398.00" stroke="#d94a4a" stroke-width="1.1" />
<line x1="524.40" y1="387.40" x2="524.40" y2="398.60" stroke="#3fb56b" stroke-width="1.3" />
<line x1="526.60" y1="394.00" x2="528.00" y2="398.00" stroke="#d94a4a" stroke-width="0.9" />
<path d="M532.90 392.15h3l-1.50 1.7z" fill="#d5d9de" stroke="none" stroke-width="1" />
<path d="M542.4 397.4 H551.4 M542.4 397.4 L551 388.8" fill="none" stroke="#e8eaed" stroke-width="0.9" />
<rect x="557.20" y="389.60" width="6.60" height="7.80" fill="none" stroke="#c3c8cf" stroke-width="0.9" />
<rect x="555.20" y="387.80" width="2.60" height="2.60" fill="none" stroke="#f0c040" stroke-width="0.8" />
<path d="M569.90 392.15h3l-1.50 1.7z" fill="#d5d9de" stroke="none" stroke-width="1" />
<path d="M583.4 388.4 V393.6 M583.4 393.6 L579.6 397.4 M583.4 393.6 L587.1999999999999 397.4" fill="none" stroke="#e8eaed" stroke-width="1.9" />
<rect x="586.40" y="388.00" width="3.00" height="2.40" fill="#bcd6f2" />
<path d="M597.4 388.4 V393.6 M597.4 393.6 L593.6 397.4 M597.4 393.6 L601.1999999999999 397.4" fill="none" stroke="#dfe2e6" stroke-width="1.9" />
<path d="M600 388.4 l1.8 -1 v3.2z" fill="#dfe2e6" stroke="none" stroke-width="1" />
<path d="M611.4 388.4 V393.6 M611.4 393.6 L607.6 397.4 M611.4 393.6 L615.1999999999999 397.4" fill="none" stroke="#dfe2e6" stroke-width="1.9" />
<path d="M631.30 392.15h3l-1.50 1.7z" fill="#d5d9de" stroke="none" stroke-width="1" />
<circle cx="645.40" cy="393.00" r="2.50" fill="none" stroke="#d5d9de" stroke-width="1.7" />
<line x1="648.40" y1="393.00" x2="649.80" y2="393.00" stroke="#d5d9de" stroke-width="1.3" />
<line x1="647.52" y1="395.12" x2="648.51" y2="396.11" stroke="#d5d9de" stroke-width="1.3" />
<line x1="645.40" y1="396.00" x2="645.40" y2="397.40" stroke="#d5d9de" stroke-width="1.3" />
<line x1="643.28" y1="395.12" x2="642.29" y2="396.11" stroke="#d5d9de" stroke-width="1.3" />
<line x1="642.40" y1="393.00" x2="641.00" y2="393.00" stroke="#d5d9de" stroke-width="1.3" />
<line x1="643.28" y1="390.88" x2="642.29" y2="389.89" stroke="#d5d9de" stroke-width="1.3" />
<line x1="645.40" y1="390.00" x2="645.40" y2="388.60" stroke="#d5d9de" stroke-width="1.3" />
<line x1="647.52" y1="390.88" x2="648.51" y2="389.89" stroke="#d5d9de" stroke-width="1.3" />
<path d="M655.00 392.15h3l-1.50 1.7z" fill="#d5d9de" stroke="none" stroke-width="1" />
<line x1="664.60" y1="393.00" x2="673.20" y2="393.00" stroke="#d5d9de" stroke-width="1" />
<line x1="668.90" y1="388.60" x2="668.90" y2="397.40" stroke="#d5d9de" stroke-width="1" />
<rect x="679.40" y="388.20" width="3.40" height="3.40" fill="none" stroke="#aeb4bd" stroke-width="0.8" />
<circle cx="686.60" cy="390.20" r="1.70" fill="none" stroke="#aeb4bd" stroke-width="0.8" />
<path d="M683.6 393.4 L686.4 398 H680.8Z" fill="none" stroke="#aeb4bd" stroke-width="0.8" />
<rect x="696.6" y="388.6" width="6.8" height="7.8" rx="2" fill="#e4e6e9"/>
<line x1="696.60" y1="391.40" x2="703.40" y2="391.40" stroke="#9aa0a8" stroke-width="0.6" />
<line x1="696.60" y1="393.80" x2="703.40" y2="393.80" stroke="#9aa0a8" stroke-width="0.6" />
<path d="M701 395.4 l1.4 1.4 l2.6 -2.8" fill="none" stroke="#3fb56b" stroke-width="1.2" />
<rect x="711.60" y="388.20" width="7.80" height="7.40" fill="#dfe3e8" />
<rect x="713.00" y="389.40" width="5.00" height="4.20" fill="#6fa8dc" />
<path d="M716.6 397.6 l2 -4 l2 4z" fill="#e8954c" stroke="none" stroke-width="1" />
<rect x="726.40" y="391.20" width="9.40" height="5.40" fill="#c9cdd2" />
<rect x="728.00" y="388.60" width="6.00" height="2.60" fill="#eef0f1" />
<rect x="728.20" y="394.60" width="5.60" height="2.80" fill="#e8a04c" />
<path d="M734.4 389 l1.8 1.2 l-1.8 1.2z" fill="#5d9fd8" stroke="none" stroke-width="1" />
<rect x="743.60" y="389.40" width="8.80" height="7.00" fill="none" stroke="#c9cdd2" stroke-width="1" />
<path d="M745.2 394.8 v-1.6 M745.2 394.8 h1.6 M750.8 391 v1.6 M750.8 391 h-1.6" fill="none" stroke="#c9cdd2" stroke-width="0.8" />
<line x1="757.00" y1="389.80" x2="766.00" y2="389.80" stroke="#dfe2e6" stroke-width="1.3" />
<line x1="757.00" y1="393.10" x2="766.00" y2="393.10" stroke="#dfe2e6" stroke-width="1.3" />
<line x1="757.00" y1="396.40" x2="766.00" y2="396.40" stroke="#dfe2e6" stroke-width="1.3" />
</svg>
<span class="t" style="left:31.00px;top:1.71px;font-size:6.7px;line-height:7.77px;color:#f2f4f6;font-weight:bold;">Home</span>
<span class="t" style="left:61.00px;top:2.13px;font-size:6.5px;line-height:7.54px;color:#c5cad1;">Insert</span>
<span class="t" style="left:88.80px;top:2.13px;font-size:6.5px;line-height:7.54px;color:#c5cad1;letter-spacing:0.16px;">Annotate</span>
<span class="t" style="left:128.00px;top:2.13px;font-size:6.5px;line-height:7.54px;color:#c5cad1;">Parametric</span>
<span class="t" style="left:171.00px;top:2.13px;font-size:6.5px;line-height:7.54px;color:#c5cad1;">View</span>
<span class="t" style="left:196.00px;top:2.13px;font-size:6.5px;line-height:7.54px;color:#c5cad1;">Manage</span>
<span class="t" style="left:232.50px;top:2.13px;font-size:6.5px;line-height:7.54px;color:#c5cad1;letter-spacing:0.22px;">Output</span>
<span class="t" style="left:264.50px;top:2.13px;font-size:6.5px;line-height:7.54px;color:#c5cad1;letter-spacing:0.16px;">Add-ins</span>
<span class="t" style="left:299.00px;top:2.13px;font-size:6.5px;line-height:7.54px;color:#c5cad1;letter-spacing:0.1px;">Collaborate</span>
<span class="t" style="left:345.00px;top:2.13px;font-size:6.5px;line-height:7.54px;color:#c5cad1;">Featured Apps</span>
<span class="t" style="left:13.10px;transform:translateX(-50%);top:35.83px;font-size:6.5px;line-height:7.54px;color:#dfe3e8;">Line</span>
<span class="t" style="left:37.50px;transform:translateX(-50%);top:35.83px;font-size:6.5px;line-height:7.54px;color:#dfe3e8;">Polyline</span>
<span class="t" style="left:65.60px;transform:translateX(-50%);top:35.83px;font-size:6.5px;line-height:7.54px;color:#dfe3e8;">Circle</span>
<span class="t" style="left:91.30px;transform:translateX(-50%);top:35.83px;font-size:6.5px;line-height:7.54px;color:#dfe3e8;">Arc</span>
<span class="t" style="left:216.00px;transform:translateX(-50%);top:35.83px;font-size:6.5px;line-height:7.54px;color:#dfe3e8;">Text</span>
<span class="t" style="left:245.60px;transform:translateX(-50%);top:35.83px;font-size:6.5px;line-height:7.54px;color:#dfe3e8;">Dimension</span>
<span class="t" style="left:304.00px;transform:translateX(-50%);top:35.83px;font-size:6.5px;line-height:7.54px;color:#dfe3e8;letter-spacing:-0.24px;">Layer</span>
<span class="t" style="left:303.60px;transform:translateX(-50%);top:44.53px;font-size:6.5px;line-height:7.54px;color:#dfe3e8;">Properties</span>
<span class="t" style="left:451.90px;transform:translateX(-50%);top:35.83px;font-size:6.5px;line-height:7.54px;color:#dfe3e8;">Insert</span>
<span class="t" style="left:502.30px;transform:translateX(-50%);top:35.83px;font-size:6.5px;line-height:7.54px;color:#dfe3e8;">Match</span>
<span class="t" style="left:502.50px;transform:translateX(-50%);top:44.53px;font-size:6.5px;line-height:7.54px;color:#dfe3e8;">Properties</span>
<span class="t" style="left:621.40px;transform:translateX(-50%);top:35.83px;font-size:6.5px;line-height:7.54px;color:#dfe3e8;">Group</span>
<span class="t" style="left:668.20px;transform:translateX(-50%);top:35.83px;font-size:6.5px;line-height:7.54px;color:#dfe3e8;">Measure</span>
<span class="t" style="left:718.60px;transform:translateX(-50%);top:35.83px;font-size:6.5px;line-height:7.54px;color:#dfe3e8;letter-spacing:-0.35px;">Paste</span>
<span class="t" style="left:52.80px;top:57.13px;font-size:6.5px;line-height:7.54px;color:#d5d9df;letter-spacing:-0.18px;">Draw</span>
<span class="t" style="left:150.70px;top:57.13px;font-size:6.5px;line-height:7.54px;color:#d5d9df;letter-spacing:0.3px;">Modify</span>
<span class="t" style="left:223.00px;top:57.13px;font-size:6.5px;line-height:7.54px;color:#d5d9df;letter-spacing:0.27px;">Annotation</span>
<span class="t" style="left:349.50px;top:57.13px;font-size:6.5px;line-height:7.54px;color:#d5d9df;letter-spacing:-0.28px;">Layers</span>
<span class="t" style="left:449.90px;top:57.13px;font-size:6.5px;line-height:7.54px;color:#d5d9df;">Block</span>
<span class="t" style="left:524.50px;top:57.13px;font-size:6.5px;line-height:7.54px;color:#d5d9df;">Properties</span>
<span class="t" style="left:602.80px;top:57.12px;font-size:6px;line-height:6.96px;color:#d5d9df;">»</span>
<span class="t" style="left:614.00px;top:57.13px;font-size:6.5px;line-height:7.54px;color:#d5d9df;">Groups</span>
<span class="t" style="left:659.70px;top:57.13px;font-size:6.5px;line-height:7.54px;color:#d5d9df;">Utilities</span>
<span class="t" style="left:711.00px;top:57.13px;font-size:6.5px;line-height:7.54px;color:#d5d9df;">Clipboard</span>
<span class="t" style="left:18.00px;top:72.23px;font-size:6.5px;line-height:7.54px;color:#c0c5cc;">Start</span>
<span class="t" style="left:87.50px;top:72.23px;font-size:6.5px;line-height:7.54px;color:#e3e6ea;">Drawing1*</span>
<span class="t" style="left:2.00px;top:88.03px;font-size:6.5px;line-height:7.54px;color:#c3c7cd;font-weight:bold;-webkit-text-stroke:0;">[&#8722;][Top][2D Wireframe]</span>
<span class="t" style="left:12.70px;transform:translateX(-50%);top:327.08px;font-size:10.2px;line-height:11.83px;color:#b9bdc3;-webkit-text-stroke:0;">Y</span>
<span class="t" style="left:43.70px;transform:translateX(-50%);top:357.50px;font-size:8.8px;line-height:10.21px;color:#b9bdc3;-webkit-text-stroke:0;">X</span>
<span class="t" style="left:725.00px;transform:translateX(-50%);top:103.74px;font-size:8.2px;line-height:9.51px;color:#d9dcdf;font-weight:bold;">N</span>
<span class="t" style="left:725.00px;transform:translateX(-50%);top:149.84px;font-size:8.2px;line-height:9.51px;color:#d9dcdf;font-weight:bold;">S</span>
<span class="t" style="left:702.20px;transform:translateX(-50%);top:126.84px;font-size:8.2px;line-height:9.51px;color:#d9dcdf;font-weight:bold;">W</span>
<span class="t" style="left:748.00px;transform:translateX(-50%);top:126.84px;font-size:8.2px;line-height:9.51px;color:#d9dcdf;font-weight:bold;">E</span>
<span class="t" style="left:724.90px;transform:translateX(-50%);top:128.75px;font-size:4.4px;line-height:5.10px;color:#5f656e;">TOP</span>
<span class="t" style="left:714.40px;top:168.92px;font-size:6px;line-height:6.96px;color:#4b515b;">WCS</span>
<span class="t" style="left:206.40px;top:374.19px;font-size:6.4px;line-height:7.42px;color:#a2a6ac;font-family:'Liberation Mono',monospace;font-style:italic;">Type a command</span>
<span class="t" style="left:13.00px;top:386.31px;font-size:6.7px;line-height:7.77px;color:#f2f4f6;font-weight:bold;">Model</span>
<span class="t" style="left:45.60px;top:386.43px;font-size:6.5px;line-height:7.54px;color:#b9bfc8;">Layout1</span>
<span class="t" style="left:82.60px;top:386.43px;font-size:6.5px;line-height:7.54px;color:#b9bfc8;">Layout2</span>
<span class="t" style="left:416.70px;top:388.77px;font-size:6.6px;line-height:7.66px;color:#e6e9ec;font-weight:bold;letter-spacing:-0.25px;">MODEL</span>
<span class="t" style="left:620.60px;top:389.65px;font-size:5.6px;line-height:6.50px;color:#c5c9cf;">1:1</span>
<span class="t" style="left:366.60px;top:16.83px;font-size:6.5px;line-height:7.54px;color:#9fb4cc;">0</span>
<span class="t" style="left:552.70px;top:16.73px;font-size:6.5px;line-height:7.54px;color:#d9dde2;letter-spacing:-0.2px;">ByLayer</span>
<span class="t" style="left:570.00px;top:29.73px;font-size:6.5px;line-height:7.54px;color:#d9dde2;letter-spacing:-0.2px;">ByLayer</span>
<span class="t" style="left:570.00px;top:43.53px;font-size:6.5px;line-height:7.54px;color:#d9dde2;letter-spacing:-0.2px;">ByLayer</span>
</div></div></div>
</body></html>
